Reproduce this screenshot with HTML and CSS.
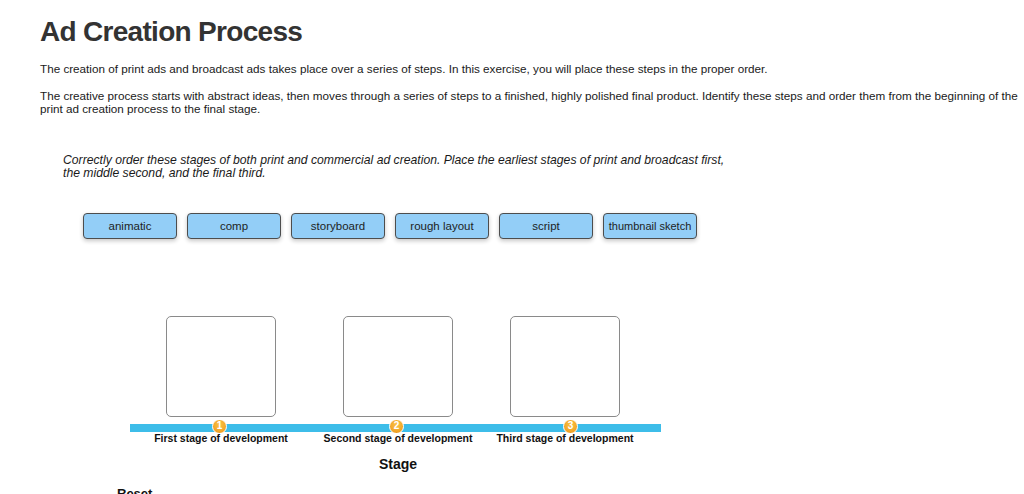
FILE: index.html
```html
<!DOCTYPE html>
<html>
<head>
<meta charset="utf-8">
<title>Ad Creation Process</title>
<link rel="stylesheet" href="styles.css">
</head>
<body>
<div class="page">
  <h1 class="title">Ad Creation Process</h1>
  <p class="intro">The creation of print ads and broadcast ads takes place over a series of steps. In this exercise, you will place these steps in the proper order.</p>
  <p class="intro">The creative process starts with abstract ideas, then moves through a series of steps to a finished, highly polished final product. Identify these steps and order them from the beginning of the print ad creation process to the final stage.</p>

  <p class="instruction">Correctly order these stages of both print and commercial ad creation. Place the earliest stages of print and broadcast first,<br>the middle second, and the final third.</p>

  <div class="chips">
    <div class="chip">animatic</div>
    <div class="chip">comp</div>
    <div class="chip">storyboard</div>
    <div class="chip">rough layout</div>
    <div class="chip">script</div>
    <div class="chip chip-small">thumbnail sketch</div>
  </div>

  <div class="timeline">
    <div class="cols boxes">
      <div class="col"><div class="drop"></div></div>
      <div class="col"><div class="drop"></div></div>
      <div class="col"><div class="drop"></div></div>
    </div>
    <div class="bar">
      <div class="cols markers">
        <div class="col"><span class="num">1</span></div>
        <div class="col"><span class="num">2</span></div>
        <div class="col"><span class="num num-3">3</span></div>
      </div>
    </div>
    <div class="cols labels">
      <div class="col">First stage of development</div>
      <div class="col">Second stage of development</div>
      <div class="col">Third stage of development</div>
    </div>
    <div class="cols axis">
      <div class="col"></div>
      <div class="col axis-title">Stage</div>
      <div class="col"></div>
    </div>
  </div>

  <div class="reset">Reset</div>
</div>
</body>
</html>
```

FILE: styles.css
```css
html, body {
  margin: 0;
  padding: 0;
  background: #ffffff;
}

body {
  font-family: "Liberation Sans", Arial, Helvetica, sans-serif;
  color: #1a1a1a;
  overflow: hidden;
}

.page {
  padding: 16px 0 0 40px;
  width: 984px;
}

.title {
  margin: 0 0 14px;
  font-size: 28px;
  line-height: 32px;
  letter-spacing: -0.7px;
  font-weight: bold;
  color: #333333;
}

.intro {
  margin: 0 0 14px;
  font-size: 11.7px;
  line-height: 13px;
  width: 982px;
}

.instruction {
  margin: 39px 0 0 23px;
  font-size: 12.2px;
  line-height: 13px;
  font-style: italic;
}

.chips {
  display: flex;
  gap: 10px;
  margin: 33px 0 0 43px;
}

.chip {
  box-sizing: border-box;
  width: 94px;
  height: 26px;
  background: #93cef7;
  border: 1px solid #4d4d4d;
  border-radius: 4px;
  box-shadow: 0 2px 4px rgba(0, 0, 0, 0.22);
  font-size: 11.5px;
  line-height: 24px;
  text-align: center;
  color: #1e1e1e;
}

.chip-small {
  font-size: 11px;
  white-space: nowrap;
}

.timeline {
  margin: 77px 0 0 90px;
  width: 531px;
}

.cols {
  display: grid;
  grid-template-columns: 182px 172px 162px;
}

.col {
  display: flex;
  justify-content: center;
}

.drop {
  box-sizing: border-box;
  width: 110px;
  height: 101px;
  border: 1px solid #8a8a8a;
  border-radius: 5px;
  background: #ffffff;
}

.bar {
  position: relative;
  margin-top: 7px;
  height: 8px;
  background: #3dbde9;
}

.markers {
  position: absolute;
  left: 0;
  top: -5px;
}

.num {
  box-sizing: border-box;
  width: 15px;
  height: 15px;
  border-radius: 50%;
  border: 1.5px solid #ffffff;
  background: radial-gradient(circle at 50% 35%, #fbc443 0%, #f0a226 70%, #e2901c 100%);
  color: #ffffff;
  font-size: 10px;
  font-weight: bold;
  line-height: 12px;
  text-align: center;
  margin-left: -3px;
}

.num-3 {
  margin-left: 11px;
}

.labels {
  margin-top: 0;
  font-size: 10.5px;
  font-weight: bold;
  line-height: 12px;
  color: #111111;
  white-space: nowrap;
}

.axis {
  margin-top: 12px;
}

.axis-title {
  font-size: 14px;
  font-weight: bold;
  line-height: 16px;
  color: #111111;
}

.reset {
  margin: 14px 0 0 77px;
  font-size: 13px;
  font-weight: bold;
  line-height: 16px;
  color: #111111;
}
```
